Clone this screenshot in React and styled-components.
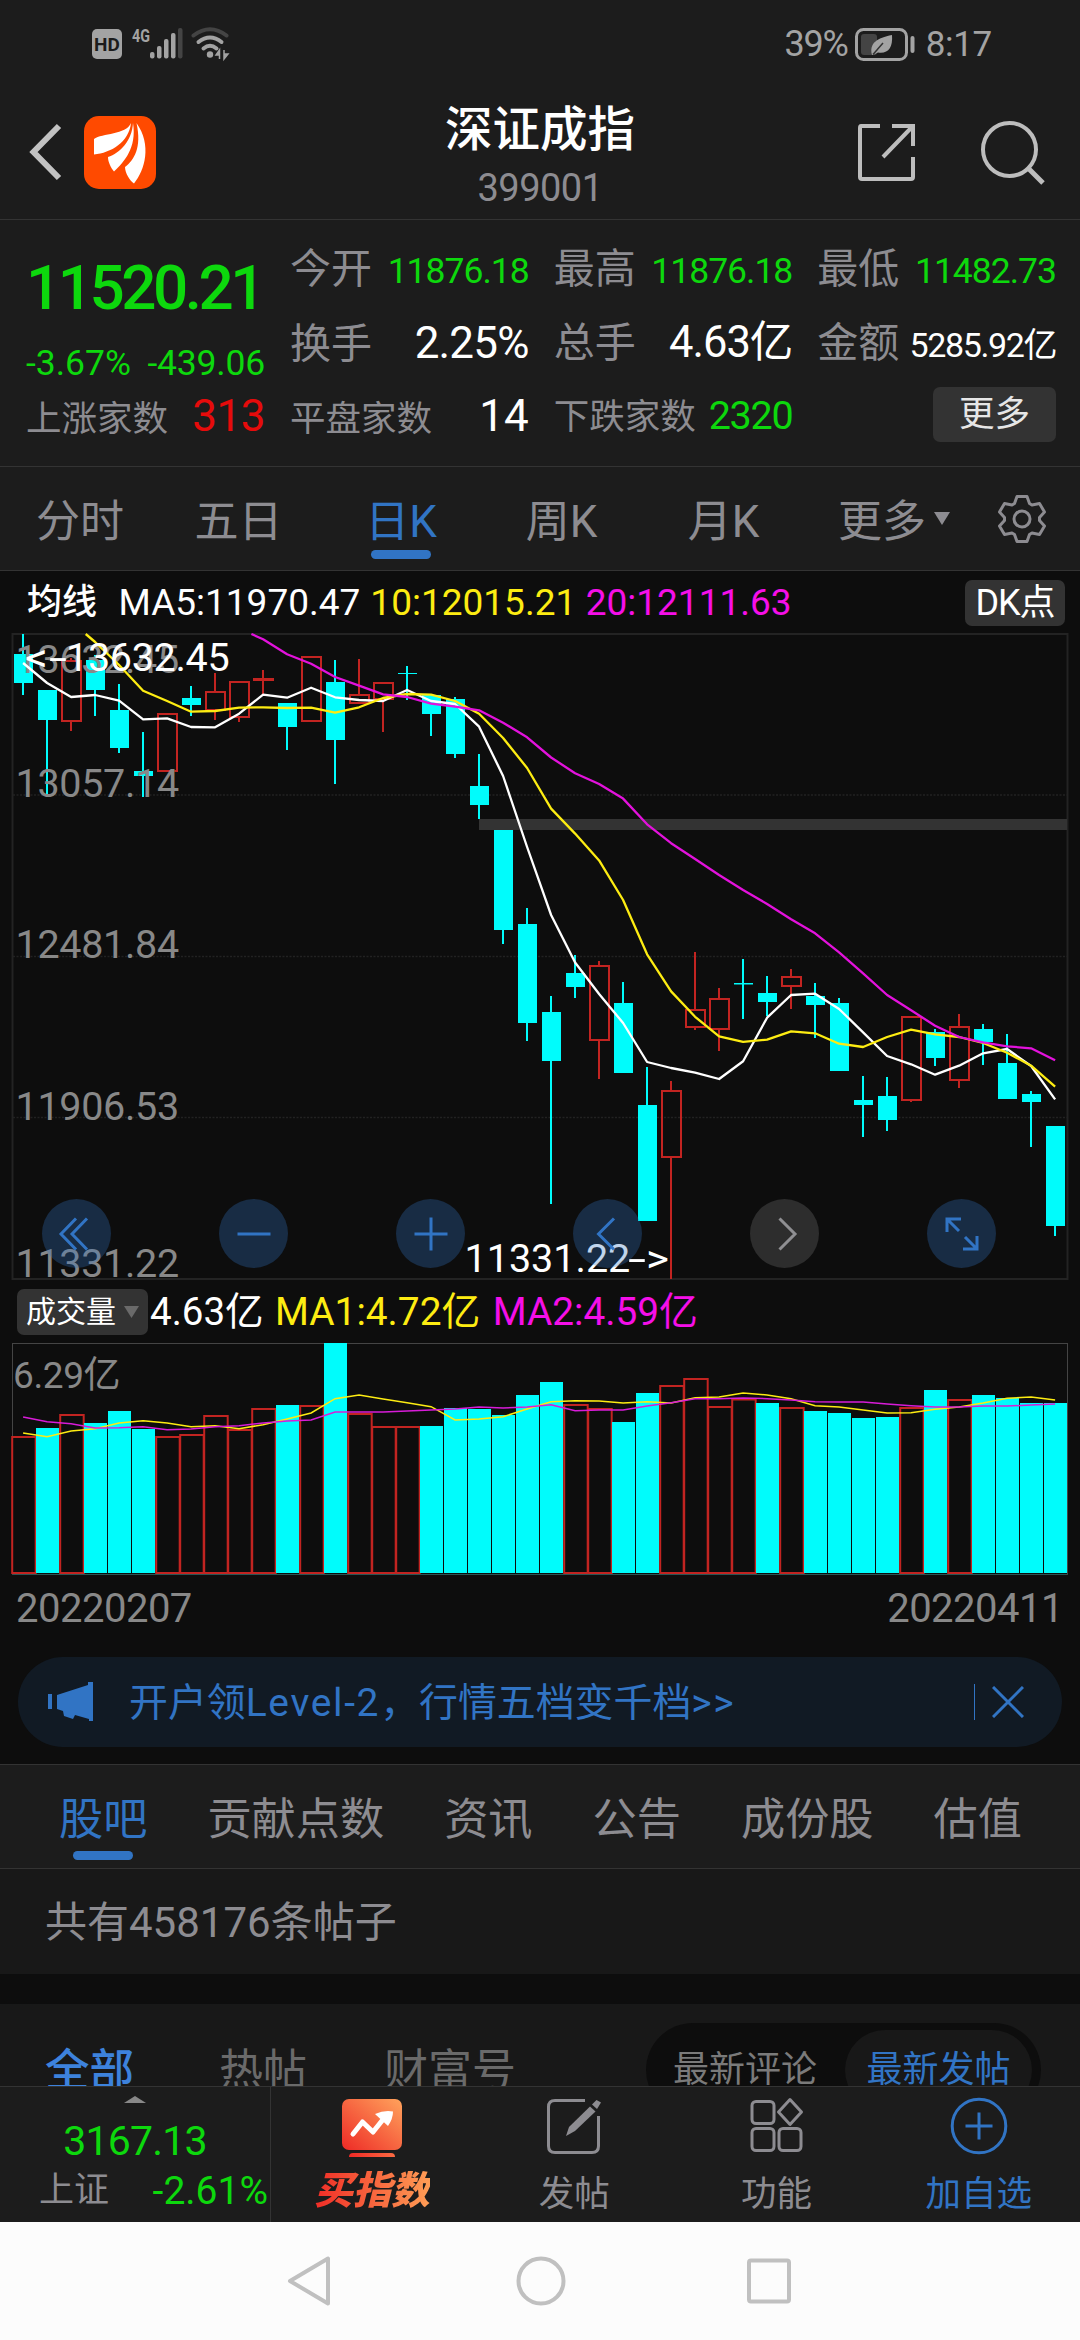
import React from 'react';
import styled, { createGlobalStyle, css } from 'styled-components';

const c = {
  panel: '#1c1c1c',
  sheet: '#181818',
  ink: '#0d0d0d',
  line: '#333333',
  grey: '#8d8c91',
  axis: '#888888',
  blue: '#3174c4',
  green: '#0dd80d',
  red: '#e60b0b',
  cyan: '#00fcfc',
  candleRed: '#c22421',
  yellow: '#fdec12',
  magenta: '#f50fe8',
  chip: '#333333',
};

const Global = createGlobalStyle`
  * { box-sizing: border-box; }
  body {
    margin: 0;
    background: ${c.ink};
    font-family: Roboto, "Noto Sans CJK SC", sans-serif;
    color: #fff;
  }
  svg { display: block; flex: none; }
`;

const Screen = styled.div`
  width: 1080px;
  height: 2340px;
  overflow: hidden;
  display: flex;
  flex-direction: column;
  background: ${c.ink};
`;

const Text = styled.span`
  white-space: nowrap;
  font-size: ${(p) => p.$size || 36}px;
  line-height: ${(p) => p.$lh || 1}${(p) => (p.$lh ? 'px' : '')};
  color: ${(p) => p.$color || '#fff'};
  letter-spacing: ${(p) => p.$ls || 0}px;
  font-weight: ${(p) => p.$weight || 400};
  margin-left: ${(p) => p.$ml || 0}px;
  margin-right: ${(p) => p.$mr || 0}px;
`;

/* ---------- status bar ---------- */

const StatusBar = styled.div`
  height: 88px;
  padding: 0 88px 0 92px;
  background: ${c.panel};
  display: flex;
  align-items: center;
  justify-content: space-between;
`;

const StatusGroup = styled.div`
  display: flex;
  align-items: center;
`;

function StatusIcons() {
  return (
    <svg width="140" height="40" viewBox="92 23 140 40">
      <rect x="92" y="28" width="30" height="30" rx="5" fill="#a3a3a3" />
      <text x="107" y="50" fontSize="19" fontWeight="700" fill="#1c1c1c" textAnchor="middle">HD</text>
      <text x="132" y="40.5" fontSize="18" fontWeight="700" fill="#a3a3a3" textLength="18" lengthAdjust="spacingAndGlyphs">4G</text>
      <g fill="#a3a3a3">
        <rect x="150" y="51" width="4.5" height="6.5" rx="2" />
        <rect x="157" y="45" width="4.5" height="12.5" rx="2" />
        <rect x="164" y="38" width="4.5" height="19.5" rx="2" />
        <rect x="171" y="32" width="4.5" height="25.5" rx="2" />
        <rect x="178" y="27" width="4.5" height="30.5" rx="2" fill="#444" />
      </g>
      <g fill="none" strokeWidth="4" strokeLinecap="round">
        <path d="M193.500 34.500Q210 22 226.500 34.500" stroke="#444" />
        <path d="M198.500 41Q210 32 221.500 41" stroke="#a3a3a3" />
        <path d="M203.500 47.500Q210 42 216.500 47.500" stroke="#a3a3a3" />
      </g>
      <circle cx="210" cy="53.500" r="3.200" fill="#a3a3a3" />
      <path d="M219.500 49v9M219.500 49l-3.500 5h3.500zM224 49v9M224 58l4-5h-4z" fill="#a3a3a3" stroke="#a3a3a3" strokeWidth="1.500" />
    </svg>
  );
}

function Battery() {
  return (
    <svg width="62" height="36" viewBox="853 24 62 36">
      <rect x="855.500" y="27.500" width="50" height="30" rx="7" fill="none" stroke="#a3a3a3" strokeWidth="3" />
      <rect x="860" y="32" width="16" height="21" rx="3" fill="#444" />
      <path d="M871 53C868 41 876 36 891 33C892 46 887 52 877 50.500L872 53z" fill="#a3a3a3" />
      <path d="M872 52.500L882 41" stroke="#333" strokeWidth="1.500" />
      <rect x="909.500" y="34" width="4" height="17" rx="2" fill="#a3a3a3" />
    </svg>
  );
}

/* ---------- title bar ---------- */

const TitleBar = styled.header`
  height: 132px;
  padding: 0 35px 0 28px;
  background: ${c.panel};
  border-bottom: 1px solid ${c.line};
  display: grid;
  grid-template-columns: 1fr auto 1fr;
  align-items: start;
`;

const HeaderSide = styled.div`
  display: flex;
  align-items: center;
  height: 129px;
  gap: ${(p) => p.$gap}px;
  justify-content: ${(p) => (p.$end ? 'flex-end' : 'flex-start')};
`;

const TitleBlock = styled.div`
  display: flex;
  flex-direction: column;
  align-items: center;
  padding: 12px 0 0 7px;
`;

function BrandLogo() {
  return (
    <svg width="72" height="73" viewBox="0 0 72 73">
      <rect width="72" height="73" rx="15" fill="#ff4a00" />
      <path d="M47 7C42 19 18 17 10 23V38.500C27 37 45 26 47 7z" fill="#fff" />
      <path d="M49 7C48 25 36 37 24 41C24 46 27 52 30 55.500C40 46 53 32 49 7z" fill="#fff" />
      <path d="M52.500 7C58 32 50 44 41 51C41 57 46 65 50 67.500C61 54 68 29 52.500 7z" fill="#fff" />
    </svg>
  );
}

/* ---------- quote ---------- */

const Quote = styled.section`
  height: 247px;
  padding: 12px 24px 0 26px;
  background: ${c.panel};
  border-bottom: 1px solid ${c.line};
  display: grid;
  grid-template-columns: repeat(4, 1fr);
  grid-template-rows: repeat(3, 73.5px);
  column-gap: 25px;
`;

const PriceCell = styled.div`
  grid-row: span 2;
  display: flex;
  flex-direction: column;
  align-items: flex-start;
  padding-top: 14px;
`;

const ChangeLine = styled.div`
  display: flex;
  justify-content: space-between;
  width: 239px;
  margin-top: 17px;
`;

const Cell = styled.div`
  display: flex;
  align-items: baseline;
  justify-content: space-between;
`;

const MoreCell = styled.div`
  display: flex;
  justify-content: flex-end;
  padding-top: 8px;
`;

const MoreButton = styled.button`
  width: 123px;
  height: 55px;
  padding: 0;
  border: 0;
  border-radius: 7px;
  background: ${c.chip};
  font-family: inherit;
`;

function Stat({ label, value, labelSize = 41, size = 44, color, ls }) {
  return (
    <Cell>
      <Text $size={labelSize} $lh={74} $color={c.grey}>{label}</Text>
      <Text $size={size} $lh={74} $color={color} $ls={ls}>{value}</Text>
    </Cell>
  );
}

/* ---------- tabs ---------- */

const PeriodTabs = styled.nav`
  height: 104px;
  background: ${c.panel};
  border-bottom: 1px solid ${c.line};
  display: grid;
  grid-template-columns: 160px 157px 168px 153px 171px 180px 1fr;
`;

const Tab = styled.div`
  position: relative;
  display: flex;
  align-items: flex-start;
  justify-content: ${(p) => (p.$start ? 'flex-start' : 'center')};
  padding: ${(p) => p.$pad || '31px 0 0'};
  ${(p) =>
    p.$active &&
    css`
      &::after {
        content: '';
        position: absolute;
        left: calc(50% - 30px);
        bottom: ${p.$bottom || 11}px;
        width: 60px;
        height: 9px;
        border-radius: 4.5px;
        background: ${c.blue};
      }
    `}
`;

const Caret = styled.svg`
  margin: ${(p) => p.$m};
`;

/* ---------- chart ---------- */

const IndicatorRow = styled.div`
  height: 62px;
  padding: 1px 15px 0 27px;
  display: flex;
  align-items: center;
`;

const Chip = styled.div`
  height: 46px;
  width: ${(p) => p.$w}px;
  border-radius: 7px;
  background: ${c.chip};
  display: flex;
  align-items: center;
  justify-content: center;
  margin-left: ${(p) => p.$ml || 0};
`;

const ChartArea = styled.div`
  position: relative;
  height: 648px;
`;

const ChartControls = styled.div`
  position: absolute;
  left: 42px;
  top: 566px;
  display: flex;
  gap: 108px;
`;

const RoundButton = styled.button`
  width: 69px;
  height: 69px;
  padding: 0;
  border: 0;
  border-radius: 50%;
  background: ${(p) => (p.$muted ? 'rgba(118,118,120,.3)' : 'rgba(49,116,196,.3)')};
  display: flex;
  align-items: center;
  justify-content: center;
`;

const STEP = 24;
const X0 = 23.1;
const cx = (i) => X0 + STEP * i;

/* [direction, wick top, body top, body bottom, wick bottom] */
const candles = [
  ['d', 634, 654, 683, 695], ['d', 690, 690, 720, 795], ['u', 658, 661, 721, 731], ['d', 655, 660, 690, 716],
  ['d', 684, 710, 748, 753], ['d', 732, 771, 776, 797], ['u', 713, 714, 771, 771], ['d', 686, 698, 705, 716],
  ['u', 673, 692, 710, 720], ['u', 682, 682, 717, 722], ['u', 670, 679, 680, 694], ['d', 703, 703, 727, 750],
  ['u', 657, 657, 721, 721], ['d', 660, 682, 740, 784], ['u', 659, 695, 703, 703], ['u', 683, 683, 699, 732],
  ['d', 666, 673, 674, 700], ['d', 695, 695, 714, 736], ['d', 697, 699, 754, 758], ['d', 754, 786, 805, 819],
  ['d', 830, 830, 930, 944], ['d', 908, 924, 1023, 1041], ['d', 996, 1012, 1061, 1204], ['d', 955, 973, 987, 998],
  ['u', 961, 966, 1040, 1079], ['d', 982, 1003, 1073, 1073], ['d', 1067, 1105, 1221, 1221], ['u', 1081, 1091, 1157, 1279],
  ['u', 952, 1010, 1027, 1030], ['u', 988, 999, 1029, 1051], ['d', 959, 983, 984.5, 1019], ['d', 976, 993, 1002, 1016],
  ['u', 969, 977, 986, 1009], ['d', 983, 996, 1005, 1038], ['d', 998, 1003, 1071, 1071], ['d', 1076, 1100, 1105, 1137],
  ['d', 1077, 1096, 1120, 1131], ['u', 1017, 1017, 1100, 1102], ['d', 1029, 1032, 1058, 1066], ['u', 1014, 1027, 1080, 1088],
  ['d', 1024, 1029, 1042, 1065], ['d', 1034, 1063, 1099, 1099], ['d', 1091, 1094, 1102, 1147], ['d', 1126, 1126, 1226, 1236],
];

const ma5 = [663, 683, 697, 695, 700.7, 719.3, 718.3, 727, 727.3, 713.7, 694.7, 697.7, 687.7, 697.3, 700, 701, 690, 701, 704, 726.7, 776, 847, 915, 962.5, 994, 1023, 1062, 1068, 1072.7, 1079, 1061.3, 1017.7, 995, 993.7, 1009, 1032.3, 1056, 1064.3, 1074.7, 1065.7, 1053.3, 1049, 1066, 1099.3];
const ma10 = [642, 665, 690.7, 701, 711.7, 711, 707.7, 707.3, 708, 707.7, 712.7, 707.3, 698, 694, 694.7, 701, 713.7, 738, 768, 808.6, 833.6, 860.4, 900, 954.3, 991.4, 1016.8, 1036.4, 1041.8, 1039.6, 1031.3, 1033.3, 1043.7, 1047, 1037, 1029.7, 1034.3, 1037, 1043, 1052.7, 1065.7, 1086.7];
const ma20 = [639.3, 654.3, 663.7, 677, 685.7, 694.3, 697, 703.7, 706.7, 710.3, 722.7, 737.3, 757.5, 773.2, 784, 798.6, 824.3, 843.2, 859, 875, 890, 904, 919.3, 933.3, 952.3, 973.3, 995, 1010.3, 1025.7, 1037, 1042.3, 1046.3, 1048.3, 1060.3];

const line = (values, from = 0) => values.map((y, i) => `${cx(i + from).toFixed(1)},${y}`).join(' ');

function Candle({ i, data }) {
  const [dir, high, top, bottom, low] = data;
  const x = Math.round(cx(i));
  if (dir === 'd') {
    return (
      <g fill={c.cyan}>
        <rect x={x - 1} y={high} width="2" height={low - high} />
        <rect x={x - 9} y={top} width="19" height={bottom - top} />
      </g>
    );
  }
  return (
    <g fill="none" stroke={c.candleRed} strokeWidth="2">
      <path d={`M${x} ${high}V${top}M${x} ${bottom}V${low}`} />
      <rect x={x - 9} y={top} width="19" height={bottom - top} />
    </g>
  );
}

function PriceChart() {
  return (
    <svg width="1080" height="648" viewBox="0 633 1080 648" fontSize="39.5">
      <rect x="12.500" y="634" width="1055" height="645" fill="none" stroke="#232323" strokeWidth="2" />
      {[795, 956.5, 1117.5].map((y) => (
        <path key={y} d={`M13 ${y}H1067`} stroke="#222" strokeWidth="1.500" strokeDasharray="2 1.500" />
      ))}
      <rect x="479" y="819" width="588" height="11" fill="#333" />
      {candles.map((d, i) => <Candle key={i} i={i} data={d} />)}
      <g fill={c.axis} letterSpacing="-.3">
        <text x="15.500" y="673">13632.45</text>
        <text x="15.500" y="797">13057.14</text>
        <text x="15.500" y="958">12481.84</text>
        <text x="15.500" y="1120">11906.53</text>
        <text x="15.500" y="1277">11331.22</text>
      </g>
      <g fill="none" strokeWidth="2.300" strokeLinejoin="round">
        <polyline points={line(ma5)} stroke="#fff" />
        <polyline points={`85.700,634 ${line(ma10, 3)}`} stroke={c.yellow} />
        <polyline points={`251.400,634 ${line(ma20, 10)}`} stroke="#e312dc" />
      </g>
      <g fill="#fff">
        <text x="25" y="671" textLength="23" lengthAdjust="spacingAndGlyphs">&lt;</text>
        <text x="49" y="671" textLength="18" lengthAdjust="spacingAndGlyphs">-</text>
        <text x="66" y="671" letterSpacing="-.3">13632.45</text>
        <text x="464.500" y="1272">11331.22</text>
        <text x="628" y="1272" textLength="18" lengthAdjust="spacingAndGlyphs">-</text>
        <text x="646" y="1272" textLength="23" lengthAdjust="spacingAndGlyphs">&gt;</text>
      </g>
    </svg>
  );
}

const Glyph = ({ d, muted }) => (
  <svg width="40" height="40" viewBox="-20 -20 40 40" fill="none" stroke={muted ? '#8f8f92' : c.blue} strokeWidth="3">
    <path d={d} />
  </svg>
);

const controls = [
  ['M-1 -15.500L-16 0L-1 15.500M10 -15.500L-5 0L10 15.500'],
  ['M-16.500 0H16.500'],
  ['M-16.500 0H16.500M0 -16.500V16.500'],
  ['M6 -15.500L-9.500 0L6 15.500'],
  ['M-5.500 -15.500L10 0L-5.500 15.500', true],
  ['M-15 -2V-15H-1M-15 -15L-3 -3M15 2V15H1M15 15L3 3'],
];

/* ---------- volume ---------- */

const VolumeHeader = styled.div`
  height: 62px;
  padding: 0 17px 1px;
  display: flex;
  align-items: center;
`;

const DateRow = styled.div`
  height: 79px;
  padding: 15px 17px 0 16px;
  display: flex;
  justify-content: space-between;
  align-items: flex-start;
`;

const volumes = [
  ['u', 1437], ['d', 1428], ['u', 1415], ['d', 1423], ['d', 1411], ['d', 1429], ['u', 1437], ['u', 1435], ['u', 1416], ['u', 1430], ['u', 1409],
  ['d', 1405], ['u', 1406], ['d', 1343], ['u', 1414], ['u', 1427], ['u', 1427], ['d', 1426], ['d', 1408], ['d', 1409], ['d', 1415], ['d', 1395],
  ['d', 1382], ['u', 1405], ['u', 1409], ['d', 1422], ['d', 1393], ['u', 1386], ['u', 1379], ['u', 1407], ['u', 1399.5], ['d', 1403], ['u', 1408],
  ['d', 1411], ['d', 1413], ['d', 1418], ['d', 1417], ['u', 1408], ['d', 1390], ['u', 1400], ['d', 1395], ['d', 1398], ['d', 1403], ['d', 1403],
];
const volMa1 = [1433, 1436.7, 1431, 1428.7, 1423, 1420.7, 1423, 1426.7, 1425.7, 1428.7, 1424.7, 1419, 1413, 1398.7, 1395, 1399, 1402.7, 1406.7, 1420, 1419, 1416.7, 1409, 1401.7, 1400.7, 1401, 1403, 1401.7, 1403, 1397.7, 1397, 1393, 1395, 1398.7, 1405.7, 1407, 1410, 1413, 1412.7, 1409.3, 1407, 1403, 1398.3, 1397, 1400];
const volMa2 = [1417, 1421.7, 1423.7, 1428, 1427.7, 1426.7, 1429.7, 1429, 1426.7, 1425.7, 1423, 1421, 1420, 1412, 1412, 1412, 1411, 1410, 1409, 1407, 1408, 1407, 1404.7, 1410.7, 1410, 1410, 1406, 1402.7, 1398.7, 1398.7, 1398, 1398.7, 1400, 1401.7, 1402, 1402, 1404, 1405.7, 1407, 1407, 1406, 1406, 1405, 1404];

function VolumeChart() {
  return (
    <svg width="1080" height="233" viewBox="0 1343 1080 233" fontSize="37">
      <rect x="12.500" y="1343.500" width="1055" height="231" fill="none" stroke="#444" />
      <path d="M13 1574.500H1067" stroke="#2a5555" />
      <text x="13" y="1388" fill={c.axis} letterSpacing="-.4">6.29亿</text>
      {volumes.map(([dir, top], i) => {
        const x = 12 + STEP * i;
        return dir === 'd' ? (
          <rect key={i} x={x} y={top} width="23" height={1573 - top} fill={c.cyan} />
        ) : (
          <rect key={i} x={x + 0.2} y={top} width="23.500" height={1573 - top} fill="none" stroke={c.candleRed} strokeWidth="2" />
        );
      })}
      <g fill="none" strokeWidth="1.500">
        <polyline points={line(volMa1)} stroke={c.yellow} />
        <polyline points={line(volMa2)} stroke="#d81cd8" />
      </g>
    </svg>
  );
}

/* ---------- promo banner ---------- */

const Banner = styled.div`
  height: 90px;
  margin: 2px 18px 17px;
  padding: 0 38px 0 30px;
  border-radius: 45px;
  background: #111a24;
  display: flex;
  align-items: center;
`;

const BannerText = styled(Text)`
  flex: 1;
  margin-left: 36px;
  padding-top: 2px;
`;

const Wide = styled.span`
  letter-spacing: 1.7px;
`;

const Separator = styled.i`
  width: 1px;
  height: 36px;
  margin-right: 17px;
  background: ${c.blue};
`;

/* ---------- forum ---------- */

const ForumTabs = styled.nav`
  height: 105px;
  padding: 0 59px;
  background: ${c.panel};
  border-top: 1px solid ${c.line};
  border-bottom: 1px solid ${c.line};
  display: flex;
  gap: 60px;
`;

const CountRow = styled.div`
  height: 105px;
  padding: 2px 45px 0;
  margin-bottom: 30px;
  background: ${c.sheet};
  display: flex;
  align-items: center;
`;

const FeedBar = styled.div`
  height: 82px;
  padding: 0 39px 0 45px;
  background: ${c.sheet};
  display: flex;
  align-items: flex-start;
  overflow: hidden;
`;

const FeedTabs = styled.div`
  flex: 1;
  display: flex;
  padding-top: 37px;
`;

const SortToggle = styled.div`
  flex: none;
  margin-top: 19px;
  width: 395px;
  height: 94px;
  padding: 7px 9px 7px 27px;
  border-radius: 47px;
  background: ${c.ink};
  display: flex;
  align-items: center;
  justify-content: space-between;
`;

const SortActive = styled.div`
  width: 187px;
  height: 80px;
  border-radius: 40px;
  background: ${c.sheet};
  display: flex;
  align-items: center;
  justify-content: center;
`;

/* ---------- bottom bar ---------- */

const BottomBar = styled.footer`
  height: 136px;
  background: ${c.panel};
  border-top: 1px solid ${c.line};
  display: grid;
  grid-template-columns: 271px repeat(4, 1fr);
`;

const IndexPanel = styled.div`
  border-right: 1px solid ${c.line};
  display: flex;
  flex-direction: column;
  align-items: center;
  padding-top: 9px;
`;

const IndexLine = styled.div`
  align-self: stretch;
  display: flex;
  justify-content: space-between;
  align-items: center;
  padding: 0 2px 0 39px;
`;

const Action = styled.div`
  display: flex;
  flex-direction: column;
  align-items: center;
  padding-top: 8px;
  gap: ${(p) => p.$gap || 14}px;
`;

const BuyLabel = styled(Text)`
  font-style: italic;
  font-weight: 900;
  color: transparent;
  background: linear-gradient(90deg, #f02c26, #ff9d55);
  background-clip: text;
  -webkit-background-clip: text;
`;

const NavBar = styled.div`
  height: 118px;
  flex: none;
  background: #fcfcfc;
  padding-left: 286px;
  display: flex;
  align-items: center;
`;

const NavIcon = styled.svg`
  margin-right: ${(p) => p.$mr || 0}px;
`;

function BuyIcon() {
  return (
    <svg width="60" height="62" viewBox="0 0 60 62">
      <defs>
        <linearGradient id="buy" x1="0" y1="1" x2="1" y2="0">
          <stop offset="0" stopColor="#ee2a26" />
          <stop offset="1" stopColor="#ffa35c" />
        </linearGradient>
        <linearGradient id="base" x1="0" y1="0" x2="1" y2="0">
          <stop offset="0" stopColor="#ee2a26" />
          <stop offset="1" stopColor="#fb6a42" />
        </linearGradient>
      </defs>
      <rect x="0" y="4" width="60" height="51" rx="7" fill="url(#buy)" />
      <path d="M7 64V62Q7 58 11 58H49Q53 58 53 62V64z" fill="url(#base)" />
      <path d="M11 39L20.500 27L31 37L43 22" fill="none" stroke="#fff" strokeWidth="5" strokeLinecap="round" strokeLinejoin="round" />
      <path d="M33 19Q42 15 51 16.500Q51 24 46 31z" fill="#fff" strokeLinejoin="round" />
    </svg>
  );
}

function PostIcon() {
  return (
    <svg width="60" height="62" viewBox="0 0 60 62" fill="none" stroke={c.grey} strokeWidth="3">
      <path d="M41 5.500H11Q4.500 5.500 4.500 12V51Q4.500 57.500 11 57.500H48Q54.500 57.500 54.500 51V21" />
      <path d="M22 41L25 32L46 11.500L51.500 16.500L31 36z" fill={c.grey} stroke="none" />
      <path d="M48 9.500L52.500 5L57 7.500L53 14z" fill={c.grey} stroke="none" />
    </svg>
  );
}

function FeaturesIcon() {
  return (
    <svg width="60" height="62" viewBox="0 0 60 62" fill="none" stroke={c.grey} strokeWidth="3">
      <rect x="5" y="6.500" width="22" height="22" rx="4" />
      <rect x="5" y="33.500" width="22" height="22" rx="4" />
      <rect x="32" y="33.500" width="22" height="22" rx="4" />
      <path d="M43 4.500L54.500 17L43 29.500L31.500 17z" strokeLinejoin="round" />
    </svg>
  );
}

function AddIcon() {
  return (
    <svg width="60" height="62" viewBox="0 0 60 62" fill="none" stroke={c.blue} strokeWidth="3">
      <circle cx="30" cy="31" r="26.800" />
      <path d="M16.500 31H43.500M30 17.500V44.500" />
    </svg>
  );
}

function GearIcon() {
  return (
    <svg width="50" height="50" viewBox="-25 -25 50 50" fill="none" stroke={c.grey} strokeWidth="3" strokeLinejoin="round">
      <path d="M-5 -22.500H5L7.500 -15.500L10 -14L17.500 -15.500L22.500 -7L17.500 -1.500V1.500L22.500 7L17.500 15.500L10 14L7.500 15.500L5 22.500H-5L-7.500 15.500L-10 14L-17.500 15.500L-22.500 7L-17.500 1.500V-1.500L-22.500 -7L-17.500 -15.500L-10 -14L-7.500 -15.500z" />
      <circle r="8" />
    </svg>
  );
}

export default function App() {
  return (
    <Screen>
      <Global />
      <StatusBar>
        <StatusGroup><StatusIcons /></StatusGroup>
        <StatusGroup>
          <Text $color="#a3a3a3" $size={36} $ls={-1.2} $mr={6}>39%</Text>
          <Battery />
          <Text $color="#a3a3a3" $size={35} $ls={-0.3} $ml={10}>8:17</Text>
        </StatusGroup>
      </StatusBar>

      <TitleBar>
        <HeaderSide $gap={21}>
          <svg width="35" height="60" viewBox="0 0 35 60" fill="none" stroke="#c2c2c2" strokeWidth="6">
            <path d="M31 3L5.500 29L31 55" />
          </svg>
          <BrandLogo />
        </HeaderSide>
        <TitleBlock>
          <Text $size={47.5} $lh={60} $weight={500}>深证成指</Text>
          <Text $size={38} $lh={56} $color={c.grey} $ls={-0.5}>399001</Text>
        </TitleBlock>
        <HeaderSide $end $gap={64}>
          <svg width="60" height="60" viewBox="0 0 60 60" fill="none" stroke="#bdbdbd" strokeWidth="4">
            <path d="M23 3H4Q3 3 3 5V54Q3 56 5 56H54Q56 56 56 54V34M35 3H56V23M55 4L26 34" />
          </svg>
          <svg width="64" height="64" viewBox="0 0 64 64" fill="none" stroke="#bdbdbd" strokeWidth="4">
            <circle cx="28.500" cy="28.500" r="26.500" />
            <path d="M47 47L62 62" strokeWidth="5" />
          </svg>
        </HeaderSide>
      </TitleBar>

      <Quote>
        <PriceCell>
          <Text $size={62} $lh={84} $color={c.green} $weight={500} $ls={-3.5}>11520.21</Text>
          <ChangeLine>
            <Text $size={35.5} $lh={32} $color={c.green}>-3.67%</Text>
            <Text $size={35.5} $lh={32} $color={c.green} $ls={-0.2}>-439.06</Text>
          </ChangeLine>
        </PriceCell>
        <Stat label="今开" value="11876.18" size={35.5} color={c.green} ls={-1} />
        <Stat label="最高" value="11876.18" size={35.5} color={c.green} ls={-1} />
        <Stat label="最低" value="11482.73" size={35.5} color={c.green} ls={-1} />
        <Stat label="换手" value="2.25%" ls={-0.8} />
        <Stat label="总手" value="4.63亿" size={43.5} ls={-1} />
        <Stat label="金额" value="5285.92亿" size={34} ls={-1.4} />
        <Stat label="上涨家数" value="313" labelSize={35.5} color={c.red} ls={-0.5} />
        <Stat label="平盘家数" value="14" labelSize={35.5} />
        <Stat label="下跌家数" value="2320" labelSize={35.5} size={39.5} color={c.green} ls={-1.3} />
        <MoreCell>
          <MoreButton><Text $size={35.5} $lh={55} $color="#e6e6e6">更多</Text></MoreButton>
        </MoreCell>
      </Quote>

      <PeriodTabs>
        <Tab><Text $size={44} $lh={48} $color={c.grey}>分时</Text></Tab>
        <Tab><Text $size={44} $lh={48} $color={c.grey}>五日</Text></Tab>
        <Tab $active><Text $size={44} $lh={48} $color={c.blue}>日K</Text></Tab>
        <Tab><Text $size={44} $lh={48} $color={c.grey}>周K</Text></Tab>
        <Tab><Text $size={44} $lh={48} $color={c.grey}>月K</Text></Tab>
        <Tab $start $pad="31px 0 0 29px">
          <Text $size={44} $lh={48} $color={c.grey}>更多</Text>
          <Caret $m="14px 0 0 8px" width="16" height="13"><path d="M0 0H16L8 13z" fill={c.grey} /></Caret>
        </Tab>
        <Tab $pad="27px 25px 0 0"><GearIcon /></Tab>
      </PeriodTabs>

      <IndicatorRow>
        <Text $size={35} $lh={38} $weight={500}>均线</Text>
        <Text $size={37} $lh={38} $ml={21.5}>MA5:11970.47</Text>
        <Text $size={37} $lh={38} $ml={10} $color={c.yellow}>10:12015.21</Text>
        <Text $size={37} $lh={38} $ml={9.5} $color={c.magenta}>20:12111.63</Text>
        <Chip $w={100} $ml="auto"><Text $size={36} $lh={40} $ls={-1}>DK点</Text></Chip>
      </IndicatorRow>

      <ChartArea>
        <PriceChart />
        <ChartControls>
          {controls.map(([d, muted]) => (
            <RoundButton key={d} $muted={muted}><Glyph d={d} muted={muted} /></RoundButton>
          ))}
        </ChartControls>
      </ChartArea>

      <VolumeHeader>
        <Chip $w={131}>
          <Text $size={30} $lh={40}>成交量</Text>
          <Caret $m="0 0 0 8px" width="15" height="12"><path d="M0 0H15L7.500 12z" fill="#6a6a6a" /></Caret>
        </Chip>
        <Text $size={38.5} $lh={42} $ml={2}>4.63亿</Text>
        <Text $size={38.8} $lh={42} $ml={11.5} $color={c.yellow}>MA1:4.72亿</Text>
        <Text $size={38.8} $lh={42} $ml={12.5} $color={c.magenta}>MA2:4.59亿</Text>
      </VolumeHeader>
      <VolumeChart />
      <DateRow>
        <Text $size={40} $lh={36} $color={c.axis} $ls={-0.5}>20220207</Text>
        <Text $size={40} $lh={36} $color={c.axis} $ls={-0.5}>20220411</Text>
      </DateRow>

      <Banner>
        <svg width="45" height="40" viewBox="48 1682 45 40" fill={c.blue}>
          <rect x="48" y="1694" width="4" height="15" />
          <path d="M57 1695L88 1685V1682H93V1721H89V1719L75 1715L73 1719L64 1716L63 1711L57 1709z" />
        </svg>
        <BannerText $size={38.9} $lh={50} $color={c.blue}>
          开户领<Wide>Level-2</Wide>，行情五档变千档<Wide>&gt;&gt;</Wide>
        </BannerText>
        <Separator />
        <svg width="32" height="32" viewBox="0 0 32 32" stroke={c.blue} strokeWidth="3">
          <path d="M1 1L31 31M31 1L1 31" />
        </svg>
      </Banner>

      <ForumTabs>
        {['股吧', '贡献点数', '资讯', '公告', '成份股', '估值'].map((t, i) => (
          <Tab key={t} $active={i === 0} $bottom={8}>
            <Text $size={44.2} $lh={48} $color={i === 0 ? c.blue : c.grey}>{t}</Text>
          </Tab>
        ))}
      </ForumTabs>
      <CountRow>
        <Text $size={42} $lh={50} $color={c.grey}>共有458176条帖子</Text>
      </CountRow>
      <FeedBar>
        <FeedTabs>
          <Text $size={44.5} $lh={60} $color="#3d82dc" $weight={500}>全部</Text>
          <Text $size={44} $lh={60} $color="#6a6a6a" $ml={85}>热帖</Text>
          <Text $size={44} $lh={60} $color="#6a6a6a" $ml={77}>财富号</Text>
        </FeedTabs>
        <SortToggle>
          <Text $size={36} $lh={60} $color="#7a7a7a">最新评论</Text>
          <SortActive><Text $size={36} $lh={60} $color={c.blue}>最新发帖</Text></SortActive>
        </SortToggle>
      </FeedBar>

      <BottomBar>
        <IndexPanel>
          <svg width="22" height="7" viewBox="0 0 22 7"><path d="M11 0L22 7H0z" fill="#888" /></svg>
          <Text $size={41} $lh={76} $color={c.green} $ls={-0.8}>3167.13</Text>
          <IndexLine>
            <Text $size={35} $lh={24} $color={c.grey}>上证</Text>
            <Text $size={39} $lh={24} $color={c.green}>-2.61%</Text>
          </IndexLine>
        </IndexPanel>
        <Action $gap={13}><BuyIcon /><BuyLabel $size={38.5} $lh={42}>买指数</BuyLabel></Action>
        <Action><PostIcon /><Text $size={35.5} $lh={46} $color={c.grey}>发帖</Text></Action>
        <Action><FeaturesIcon /><Text $size={35.5} $lh={46} $color={c.grey}>功能</Text></Action>
        <Action><AddIcon /><Text $size={35.5} $lh={46} $color={c.blue}>加自选</Text></Action>
      </BottomBar>

      <NavBar>
        <NavIcon $mr={184} width="46" height="52" viewBox="0 0 46 52" fill="none" stroke="#c0c0c0" strokeWidth="4" strokeLinejoin="round">
          <path d="M42 3.500V48.500L4 26z" />
        </NavIcon>
        <NavIcon $mr={180} width="50" height="50" viewBox="0 0 50 50" fill="none" stroke="#c0c0c0" strokeWidth="4">
          <circle cx="25" cy="25" r="22.500" />
        </NavIcon>
        <NavIcon width="46" height="46" viewBox="0 0 46 46" fill="none" stroke="#c0c0c0" strokeWidth="4">
          <rect x="3" y="2.500" width="40" height="41" rx="2" />
        </NavIcon>
      </NavBar>
    </Screen>
  );
}
